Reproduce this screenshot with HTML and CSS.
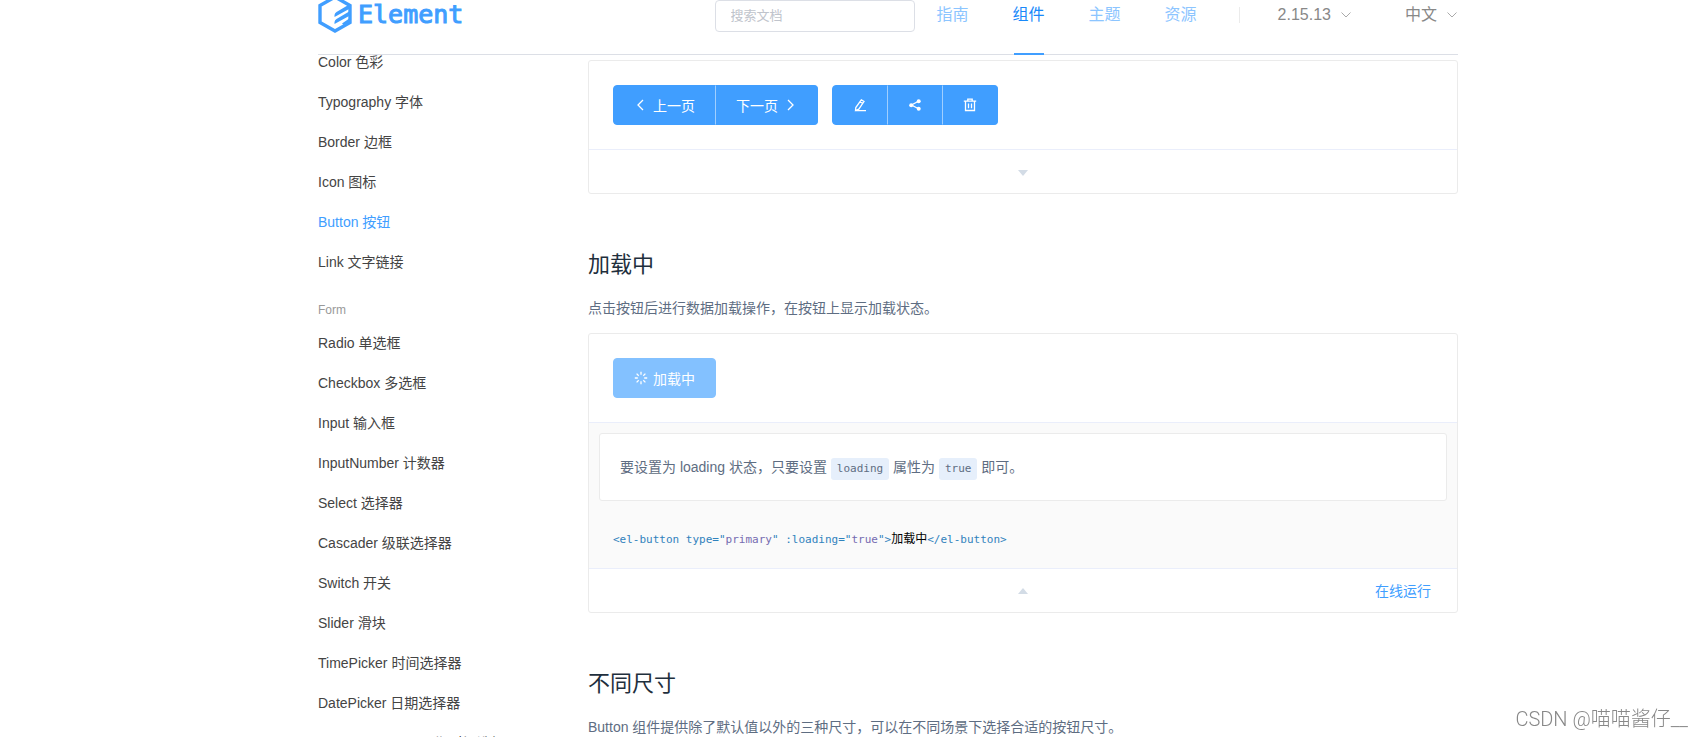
FILE: index.html
```
<!DOCTYPE html>
<html lang="zh-CN">

<head>
  <meta charset="UTF-8">
  <meta name="viewport" content="width=device-width, initial-scale=1.0">
  <title>Button 按钮 | Element</title>
  <link rel="stylesheet" href="styles.css">
</head>

<body>

  <!-- Page header -->
  <header class="header">
    <a class="logo" href="#">
      <svg class="logo-mark" viewBox="0 0 34 38" width="34" height="38" aria-hidden="true">
        <path d="M17 2 32 10.500v17L17 36 2 27.500v-17z" fill="none" stroke="currentColor" stroke-width="3.400" />
        <path d="M16.500 22v-2q.3-1.800 2-2.900L32 9v4.500zM16.500 29v-2q.3-1.800 2-2.900L32 16v4.500zM24 28.500 32 23v5l-5 3z" fill="currentColor" />
      </svg>
      <span class="logo-text">Element</span>
    </a>

    <input class="search" type="text" placeholder="搜索文档" aria-label="搜索文档">

    <nav class="nav">
      <a href="#">指南</a>
      <a class="active" href="#">组件</a>
      <a href="#">主题</a>
      <a href="#">资源</a>
    </nav>

    <div class="nav-settings">
      <button class="nav-dropdown" type="button">2.15.13
        <svg viewBox="0 0 10 6" width="10" height="6"><path d="M.5.5 5 5 9.500.5" /></svg>
      </button>
      <button class="nav-dropdown" type="button">中文
        <svg viewBox="0 0 10 6" width="10" height="6"><path d="M.5.5 5 5 9.500.5" /></svg>
      </button>
    </div>
  </header>

  <div class="container">
    <!-- Component list -->
    <nav class="side-nav">
      <ul>
        <li><a href="#">Color 色彩</a></li>
        <li><a href="#">Typography 字体</a></li>
        <li><a href="#">Border 边框</a></li>
        <li><a href="#">Icon 图标</a></li>
        <li><a class="active" href="#">Button 按钮</a></li>
        <li><a href="#">Link 文字链接</a></li>
      </ul>
      <div class="group-title">Form</div>
      <ul>
        <li><a href="#">Radio 单选框</a></li>
        <li><a href="#">Checkbox 多选框</a></li>
        <li><a href="#">Input 输入框</a></li>
        <li><a href="#">InputNumber 计数器</a></li>
        <li><a href="#">Select 选择器</a></li>
        <li><a href="#">Cascader 级联选择器</a></li>
        <li><a href="#">Switch 开关</a></li>
        <li><a href="#">Slider 滑块</a></li>
        <li><a href="#">TimePicker 时间选择器</a></li>
        <li><a href="#">DatePicker 日期选择器</a></li>
        <li><a href="#">DateTimePicker 日期时间选择器</a></li>
      </ul>
    </nav>

    <main class="content">
      <!-- Button group demo -->
      <div class="demo-block">
        <div class="source">
          <div class="button-group">
            <button class="btn" type="button">
              <svg viewBox="0 0 14 14" width="14" height="14"><path d="M9 2 4 7l5 5" /></svg>
              <span>上一页</span>
            </button>
            <button class="btn" type="button">
              <span>下一页</span>
              <svg viewBox="0 0 14 14" width="14" height="14"><path d="m5 2 5 5-5 5" /></svg>
            </button>
          </div>
          <div class="button-group">
            <button class="btn" type="button" aria-label="编辑">
              <svg viewBox="0 0 14 14" width="14" height="14"><path d="M8.300 1.800 11 3.500 5.800 11.200 2.500 12.500 2.800 9.500zM7 3.800l2.700 1.700M2.500 12.700H13" /></svg>
            </button>
            <button class="btn" type="button" aria-label="分享">
              <svg viewBox="0 0 14 14" width="14" height="14"><path d="M10.500 3.300 3.500 7l7 3.800" /><g fill="currentColor" stroke="none"><circle cx="10.700" cy="3.300" r="2" /><circle cx="3.200" cy="7.300" r="2" /><circle cx="10.700" cy="10.700" r="2" /></g></svg>
            </button>
            <button class="btn" type="button" aria-label="删除">
              <svg viewBox="0 0 14 14" width="14" height="14"><path d="M.8 3.200h12.400M4.800 3V1.200h4.400V3M2.500 3.500v9h9v-9M5.500 5.500v4.800M8.500 5.500v4.800" /></svg>
            </button>
          </div>
        </div>
        <div class="control">
          <button class="toggle" type="button" aria-label="显示代码"><span class="caret-down"></span></button>
        </div>
      </div>

      <!-- Loading demo -->
      <h3>加载中</h3>
      <p>点击按钮后进行数据加载操作，在按钮上显示加载状态。</p>
      <div class="demo-block">
        <div class="source">
          <button class="btn is-loading" type="button" disabled>
            <svg viewBox="0 0 14 14" width="14" height="14"><path d="M7 .8v3M7 10.200v3M.8 7h3M10.200 7h3M2.600 2.600l2.100 2.100M9.300 9.300l2.100 2.100M2.600 11.400l2.100-2.100M9.300 4.700l2.100-2.100" /></svg>
            <span>加载中</span>
          </button>
        </div>
        <div class="meta">
          <div class="description">要设置为 loading 状态，只要设置 <code>loading</code> 属性为 <code>true</code> 即可。</div>
          <pre class="highlight"><code><span class="tag">&lt;el-button</span> <span class="tag">type=</span><span class="quote">"</span><span class="string">primary</span><span class="quote">"</span> <span class="tag">:loading=</span><span class="quote">"</span><span class="string">true</span><span class="quote">"</span><span class="tag">&gt;</span><span class="label">加载中</span><span class="tag">&lt;/el-button&gt;</span></code></pre>
        </div>
        <div class="control">
          <button class="toggle" type="button" aria-label="隐藏代码"><span class="caret-up"></span></button>
          <a class="run-link" href="#">在线运行</a>
        </div>
      </div>

      <!-- Size section -->
      <h3>不同尺寸</h3>
      <p>Button 组件提供除了默认值以外的三种尺寸，可以在不同场景下选择合适的按钮尺寸。</p>
    </main>
  </div>

  <div class="watermark">CSDN @喵喵酱仔__</div>

</body>

</html>
```
FILE: styles.css
```
* {
  margin: 0;
  padding: 0;
  box-sizing: border-box;
}

body {
  height: 100vh;
  overflow: hidden;
  padding-left: 73px;
  font-family: "Liberation Sans", "Noto Sans CJK SC", sans-serif;
  font-size: 14px;
  color: #444;
  background: #fff;
}

a {
  color: inherit;
  text-decoration: none;
}

button {
  font: inherit;
  border: none;
  background: none;
  cursor: pointer;
}

ul {
  list-style: none;
}

/* Header */
.header {
  position: relative;
  z-index: 1;
  display: flex;
  align-items: flex-start;
  max-width: 1140px;
  height: 55px;
  margin: 0 auto;
  background: #fff;
  border-bottom: 1px solid #dcdfe6;
}

.logo {
  display: flex;
  align-items: center;
  gap: 6px;
  height: 28px;
  margin-right: auto;
  color: #409eff;
}

.logo-mark {
  flex: none;
}

.logo-text {
  font-family: "DejaVu Sans Mono", monospace;
  font-size: 25px;
  -webkit-text-stroke: 1px #409eff;
}

.search {
  width: 200px;
  height: 32px;
  padding: 0 15px 2px;
  font-family: inherit;
  font-size: 13px;
  color: #606266;
  border: 1px solid #dcdfe6;
  border-radius: 4px;
}

.search::placeholder {
  color: #c0c4cc;
}

.nav {
  display: flex;
  height: 55px;
  font-size: 16px;
  line-height: 29px;
  color: #8cc5ff;
}

.nav a {
  margin: 0 22px;
}

.nav .active {
  color: #1989fa;
  background: linear-gradient(#409eff, #409eff) no-repeat center bottom / 30px 2px;
}

.nav-settings {
  display: flex;
  align-items: center;
  gap: 54px;
  height: 16px;
  margin: 7px 1px 0 20px;
  padding-left: 38px;
  border-left: 1px solid #ebebeb;
}

.nav-dropdown {
  display: flex;
  align-items: center;
  gap: 10px;
  font-size: 16px;
  line-height: 16px;
  color: #888;
}

.nav-dropdown svg {
  fill: none;
  stroke: #aaa;
}

/* Layout */
.container {
  display: flex;
  max-width: 1140px;
  margin: 0 auto;
}

.side-nav {
  flex: none;
  width: 270px;
  margin-top: -3px;
}

.side-nav li,
.group-title {
  height: 20px;
  line-height: 20px;
  margin-bottom: 20px;
}

.side-nav .active {
  color: #409eff;
}

.side-nav .group-title {
  margin: 28px 0 13px;
  font-size: 12px;
  color: #999;
}

.content {
  flex: 1;
  padding-top: 5px;
}

.content h3 {
  margin-top: 56px;
  font-size: 22px;
  font-weight: normal;
  line-height: 30px;
  color: #1f2f3d;
}

.content p {
  margin: 16px 0 13px;
  line-height: 24px;
  color: #5e6d82;
}

/* Demo block */
.demo-block {
  border: 1px solid #ebebeb;
  border-radius: 3px;
}

.source {
  display: flex;
  gap: 14px;
  padding: 24px;
}

.button-group {
  display: flex;
}

.btn {
  display: flex;
  align-items: center;
  gap: 5px;
  height: 40px;
  padding: 0 20px;
  color: #fff;
  background: #409eff;
  border: 1px solid #409eff;
  border-radius: 4px;
}

.btn svg {
  fill: none;
  stroke: currentColor;
  stroke-width: 1.3;
}

.button-group .btn:not(:last-child) {
  margin-right: -1px;
  border-top-right-radius: 0;
  border-bottom-right-radius: 0;
}

.button-group .btn:not(:first-child) {
  border-left-color: #a0cfff;
  border-top-left-radius: 0;
  border-bottom-left-radius: 0;
}

.btn.is-loading {
  background: #83c1ff;
  border-color: #83c1ff;
}

.meta {
  padding: 10px;
  background: #fafafa;
  border-top: 1px solid #eaeefb;
}

.description {
  padding: 20px;
  line-height: 26px;
  color: #5e6d82;
  background: #fff;
  border: 1px solid #ebebeb;
  border-radius: 3px;
}

code {
  font-family: "DejaVu Sans Mono", "Noto Sans CJK SC", monospace;
  font-size: 11px;
}

.description code {
  display: inline-block;
  height: 22px;
  padding: 0 6px;
  line-height: 22px;
  background: #e6effb;
  border-radius: 3px;
}

.highlight {
  padding: 28px 14px 8px;
  line-height: 20px;
}

.highlight code {
  display: block;
}

.tag,
.quote {
  color: #3182bd;
}

.string {
  color: #756bb1;
}

.label {
  font-size: 12px;
  color: #000;
}

.control {
  position: relative;
  height: 44px;
  border-top: 1px solid #eaeefb;
}

.toggle {
  display: flex;
  align-items: center;
  justify-content: center;
  width: 100%;
  height: 100%;
}

.caret-down,
.caret-up {
  border: 5px solid transparent;
}

.caret-down {
  margin-top: 2px;
  border-top: 6px solid #d3dce6;
  border-bottom: none;
}

.caret-up {
  border-bottom: 6px solid #d3dce6;
  border-top: none;
}

/* Sits over the full-width toggle */
.run-link {
  position: absolute;
  top: 0;
  right: 26px;
  line-height: 44px;
  color: #409eff;
}

.watermark {
  position: fixed;
  right: 15px;
  bottom: 5px;
  font-family: Roboto, "Noto Sans CJK SC", sans-serif;
  font-size: 20px;
  font-weight: 300;
  line-height: 26px;
  color: #888;
}
```
